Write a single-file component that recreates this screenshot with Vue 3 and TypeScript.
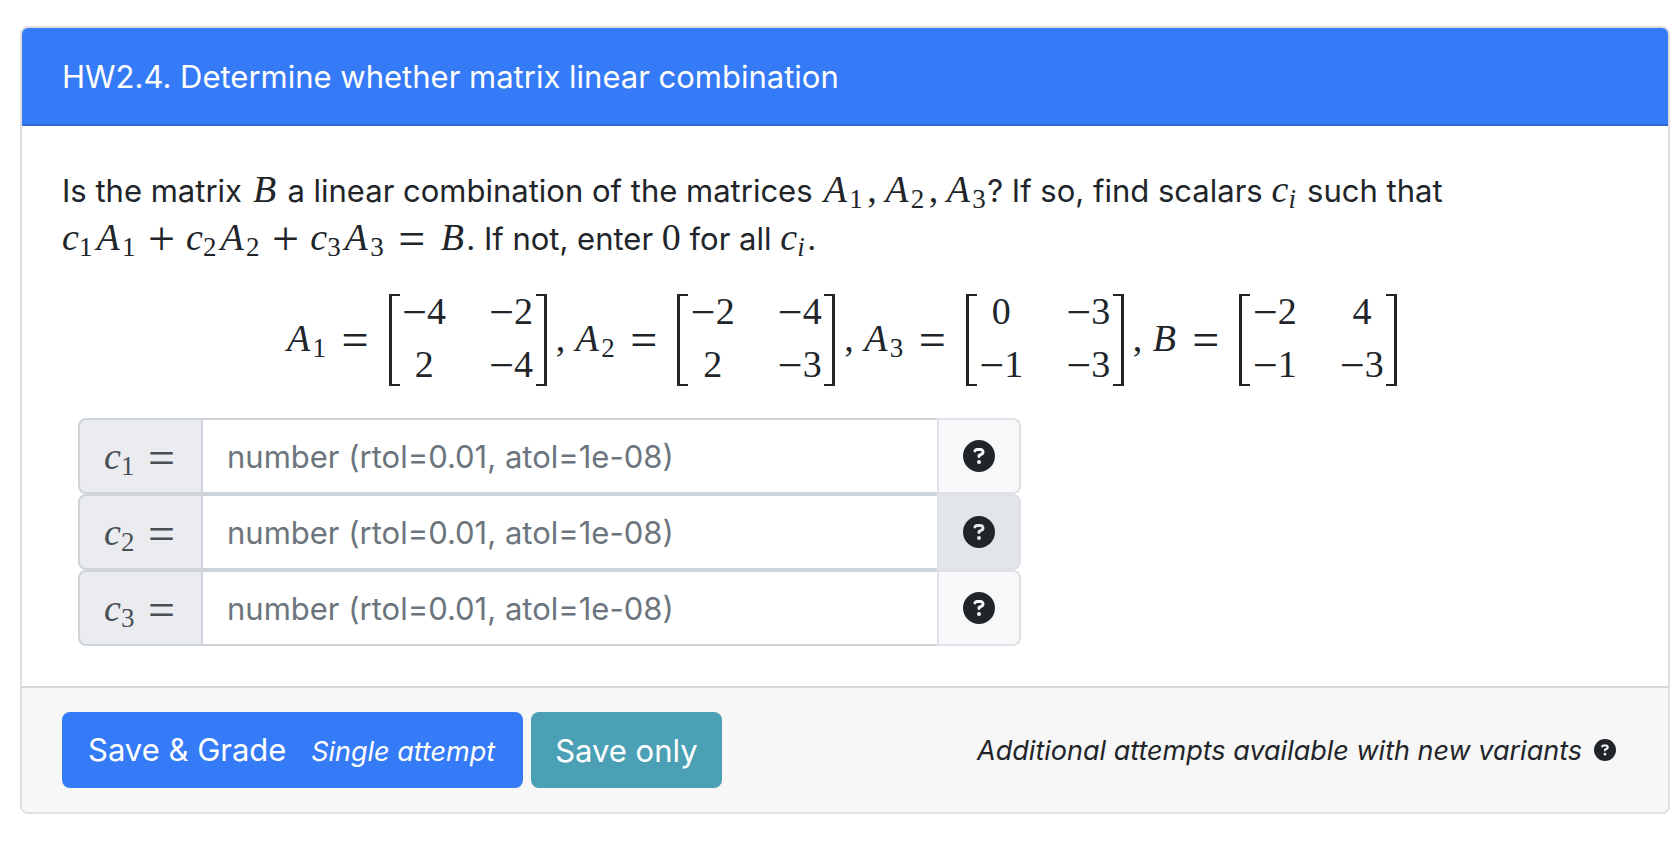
<script setup lang="ts">
import { ref } from 'vue'

interface MatrixTerm {
  name: string
  index: string
  cells: number[]
}

const terms: MatrixTerm[] = [
  { name: 'A', index: '1', cells: [-4, -2, 2, -4] },
  { name: 'A', index: '2', cells: [-2, -4, 2, -3] },
  { name: 'A', index: '3', cells: [0, -3, -1, -3] },
  { name: 'B', index: '', cells: [-2, 4, -1, -3] },
]

const answers = ref([
  { index: 1, value: '', active: false },
  { index: 2, value: '', active: true },
  { index: 3, value: '', active: false },
])

const helpIcon =
  'M256 512A256 256 0 1 0 256 0a256 256 0 1 0 0 512zM169.8 165.3c7.9-22.3 29.1-37.3 52.8-37.3h58.3c34.9 0 63.1 28.3 63.1 63.1c0 22.6-12.1 43.5-31.7 54.8L280 264.4c-.2 13-10.9 23.6-24 23.6c-13.3 0-24-10.7-24-24V250.5c0-8.6 4.6-16.5 12.1-20.8l44.3-25.4c4.7-2.7 7.6-7.7 7.6-13.1c0-8.4-6.8-15.1-15.1-15.1H222.6c-3.4 0-6.4 2.1-7.5 5.3l-.4 1.2c-4.4 12.5-18.2 19-30.6 14.6s-19-18.2-14.6-30.6l.4-1.2zM224 352a32 32 0 1 1 64 0 32 32 0 1 1 -64 0z'
</script>

<template>
  <form class="card" @submit.prevent>
    <header class="card-header">
      <h1>HW2.4. Determine whether matrix linear combination</h1>
    </header>

    <main class="card-body">
      <p class="prompt">
        Is the matrix <span class="math"><i class="cap">B</i></span> a linear combination of the matrices
        <span class="math"><i class="cap">A</i><sub>1</sub><b class="comma">,</b><i class="cap">A</i><sub>2</sub><b class="comma">,</b><i class="cap">A</i><sub>3</sub></span>? If so, find scalars
        <span class="math"><i>c</i><sub class="it">i</sub></span> such that
        <span class="math"><i>c</i><sub>1</sub><i class="cap">A</i><sub>1</sub><b class="op">+</b><i>c</i><sub>2</sub><i class="cap">A</i><sub>2</sub><b class="op">+</b><i>c</i><sub>3</sub><i class="cap">A</i><sub>3</sub><b class="op rel">=</b><i class="cap">B</i></span>. If not, enter <span class="math">0</span> for all
        <span class="math"><i>c</i><sub class="it">i</sub></span>.
      </p>

      <div class="display">
        <div v-for="(term, t) in terms" :key="t" class="term">
          <span class="math"><i class="cap">{{ term.name }}</i><sub v-if="term.index">{{ term.index }}</sub><b class="op equals">=</b></span>
          <span class="matrix">
            <span v-for="(cell, n) in term.cells" :key="n"><b v-if="cell < 0" class="minus">−</b>{{ Math.abs(cell) }}</span>
          </span>
          <span v-if="t < terms.length - 1" class="separator">,</span>
        </div>
      </div>

      <div class="answers">
        <div v-for="answer in answers" :key="answer.index" class="input-group">
          <label class="addon" :for="`c${answer.index}`">
            <span class="math"><i>c</i><sub>{{ answer.index }}</sub><b class="op label-eq">=</b></span>
          </label>
          <input
            :id="`c${answer.index}`"
            v-model="answer.value"
            type="text"
            placeholder="number (rtol=0.01, atol=1e-08)"
          />
          <button type="button" class="help" :class="{ active: answer.active }" aria-label="Help">
            <svg viewBox="0 0 512 512" aria-hidden="true"><path :d="helpIcon" /></svg>
          </button>
        </div>
      </div>
    </main>

    <footer class="card-footer">
      <button type="submit" class="btn primary">Save &amp; Grade <small>Single attempt</small></button>
      <button type="button" class="btn info">Save only</button>
      <span class="note">Additional attempts available with new variants</span>
      <button type="button" class="note-help" aria-label="About attempts">
        <svg viewBox="0 0 512 512" aria-hidden="true"><path :d="helpIcon" /></svg>
      </button>
    </footer>
  </form>
</template>

<style>
body {
  margin: 0;
  background: #fff;
}
</style>

<style scoped>
.card {
  box-sizing: border-box;
  margin: 26px 4px 36px 20px;
  border: 2px solid #dfdfdf;
  border-radius: 8px;
  overflow: hidden;
  background: #fff;
  color: #212529;
  font-family: Inter, "Liberation Sans", sans-serif;
  font-size: 31px;
  line-height: 48px;
}
button,
input {
  box-sizing: border-box;
  margin: 0;
  font: inherit;
}
.card-header {
  padding: 25px 40px 23px;
  background: #357af6;
  border-bottom: 2px solid #2f6cda;
  color: #fff;
}
h1 {
  margin: 0;
  font-size: inherit;
  font-weight: 400;
}
.card-body {
  padding: 41px 40px 40px;
}
.prompt {
  margin: 0 0 31px;
}

/* Mathematics */
.math,
.display {
  font-family: "Liberation Serif", serif;
  font-size: 38px;
}
.math {
  line-height: 0;
  white-space: nowrap;
}
.math i {
  display: inline-block;
  min-width: 17px;
}
.math .cap {
  min-width: 28px;
  text-align: center;
}
b {
  font-weight: 400;
}
.math sub {
  display: inline-block;
  min-width: 15px;
  font-size: 27px;
  line-height: 0;
  vertical-align: -6px;
}
.math .it {
  min-width: 10px;
  font-style: italic;
}
.comma {
  margin: 0 6px 0 3px;
}
.op {
  margin: 0 11px;
  font-size: 48px;
  line-height: 0;
  vertical-align: -5px;
}
.rel {
  margin: 0 13px;
}
.minus {
  font-size: 44px;
  line-height: 0;
  vertical-align: -3px;
}
.display {
  display: flex;
  justify-content: center;
  margin-bottom: 32px;
  padding-right: 8px;
}
.term {
  display: flex;
  align-items: center;
}
.term > span {
  box-sizing: border-box;
  padding-bottom: 4px;
}
.term .math,
.addon .math {
  line-height: 48px;
}
.term .equals {
  margin: 0 20px 0 14px;
  line-height: 0;
}
.matrix {
  position: relative;
  display: grid;
  grid-template-columns: 45px 45px;
  grid-auto-rows: 53px;
  align-content: center;
  column-gap: 42px;
  height: 92px;
  padding: 0 13px;
  line-height: 53px;
  text-align: center;
  white-space: nowrap;
}
.matrix::before,
.matrix::after {
  content: "";
  position: absolute;
  top: 0;
  bottom: 0;
  box-sizing: border-box;
  width: 11px;
  border: 3px solid #212529;
  border-top-width: 2px;
  border-bottom-width: 2px;
}
.matrix::before {
  left: 0;
  border-right: 0;
}
.matrix::after {
  right: 0;
  border-left: 0;
}
.separator {
  margin: 0 8px 0 9px;
}

/* Answer fields */
.answers {
  max-width: 943px;
  margin-left: 16px;
}
.input-group {
  display: flex;
  height: 76px;
}
.addon {
  display: flex;
  align-items: center;
  box-sizing: border-box;
  width: 125px;
  padding-left: 24px;
  border: 2px solid #ced4da;
  border-radius: 8px 0 0 8px;
  background: #eaecef;
  color: #495057;
}
.label-eq {
  margin: 0 0 0 12px;
}
.input-group input {
  flex: 1;
  min-width: 0;
  padding: 13px 24px 11px;
  border: 2px solid #ced4da;
  border-width: 2px 0;
  border-radius: 0;
  outline: 0;
  background: #fff;
  color: #495057;
}
.input-group input::placeholder {
  color: #6c757d;
  opacity: 1;
}
.help {
  display: flex;
  align-items: center;
  justify-content: center;
  width: 84px;
  padding: 0;
  border: 2px solid #dfe1e6;
  border-radius: 0 8px 8px 0;
  background: #f8f9fa;
}
.help.active {
  background: #e2e6ea;
}
svg {
  display: block;
  width: 32px;
  height: 32px;
  fill: #212529;
}

/* Actions */
.card-footer {
  display: flex;
  align-items: center;
  gap: 8px;
  padding: 24px 40px;
  border-top: 2px solid #d8d8d8;
  background: #f7f7f7;
}
.btn {
  height: 76px;
  border: 0;
  border-radius: 8px;
  color: #fff;
  white-space: nowrap;
}
.primary {
  padding: 2px 28px 0 26px;
  background: #357af6;
}
.info {
  padding: 2px 24px 0;
  background: #4ba0b5;
}
small {
  margin-left: 16px;
  font-size: 27px;
  font-style: italic;
}
.note {
  margin-left: auto;
  padding-top: 2px;
  font-size: 27px;
  font-style: italic;
}
.note-help {
  padding: 0 12px 0 4px;
  border: 0;
  background: none;
}
.note-help svg {
  width: 22px;
  height: 22px;
}
</style>
